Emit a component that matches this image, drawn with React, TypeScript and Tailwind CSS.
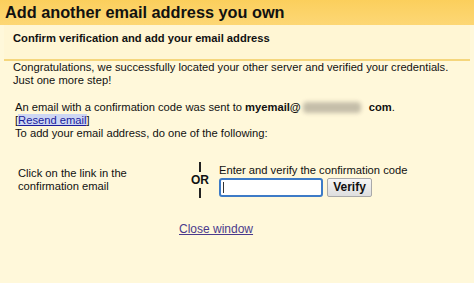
export default function App() {
  return (
    <div
      className="w-[474px] h-[283px] overflow-hidden bg-[#fff8da] text-[#111] text-[11.2px] leading-[13px]"
      style={{ fontFamily: '"Liberation Sans", Arial, sans-serif' }}
    >
      {/* Title bar */}
      <div className="h-[25px] px-[5px] bg-gradient-to-b from-[#fbcf5c] to-[#fdd775] text-[16.3px] font-bold leading-[25px]">
        Add another email address you own
      </div>

      {/* Sub header */}
      <div className="mx-[4px] h-[36px] border-b-2 border-[#f5d67c] bg-[#fff6d4] px-[9px] pt-[7px] font-bold">
        Confirm verification and add your email address
      </div>

      {/* Body */}
      <div className="px-[13px]">
        <p>Congratulations, we successfully located your other server and verified your credentials.</p>
        <p>Just one more step!</p>

        <div className="mt-[14px] pl-[2px]">
          <p className="flex items-center">
            <span>An email with a confirmation code was sent to&nbsp;</span>
            <b>myemail@</b>
            <span className="mx-[2px] inline-block h-[11px] w-[58px] rounded-sm bg-[#c5bea9] blur-[2px]" />
            <b className="ml-[6px]">com</b>.
          </p>
          <p>
            [<a href="#" className="bg-[#cdd6f3] text-[#1b1b9a] underline">Resend email</a>]
          </p>
          <p>To add your email address, do one of the following:</p>
        </div>
      </div>

      {/* Options */}
      <div className="mt-[22px] flex items-center">
        <div className="w-[188px] pl-[18px]">
          Click on the link in the
          <br />
          confirmation email
        </div>
        <div className="flex w-[24px] flex-col items-center">
          <div className="h-[10px] w-[2px] bg-[#222]" />
          <div className="py-[2px] text-[12px] font-bold leading-[12px]">OR</div>
          <div className="h-[10px] w-[2px] bg-[#222]" />
        </div>
        <div className="ml-[7px] flex flex-col">
          <div>Enter and verify the confirmation code</div>
          <div className="mt-[1px] flex items-center gap-[4px]">
            <div className="flex h-[19px] w-[104px] items-center rounded-[3px] border-2 border-[#3d7bc7] bg-white pl-[2px]">
              <div className="h-[11px] w-px bg-[#333]" />
            </div>
            <button className="h-[19px] w-[45px] rounded-[2px] border border-[#a9a9a9] bg-gradient-to-b from-[#f6f6f6] to-[#dedede] text-[12px] font-bold leading-[17px] text-[#111]">
              Verify
            </button>
          </div>
        </div>
      </div>

      <div className="mt-[25px] pl-[179px]">
        <a href="#" className="text-[12px] text-[#4b3a8c] underline">
          Close window
        </a>
      </div>
    </div>
  );
}
